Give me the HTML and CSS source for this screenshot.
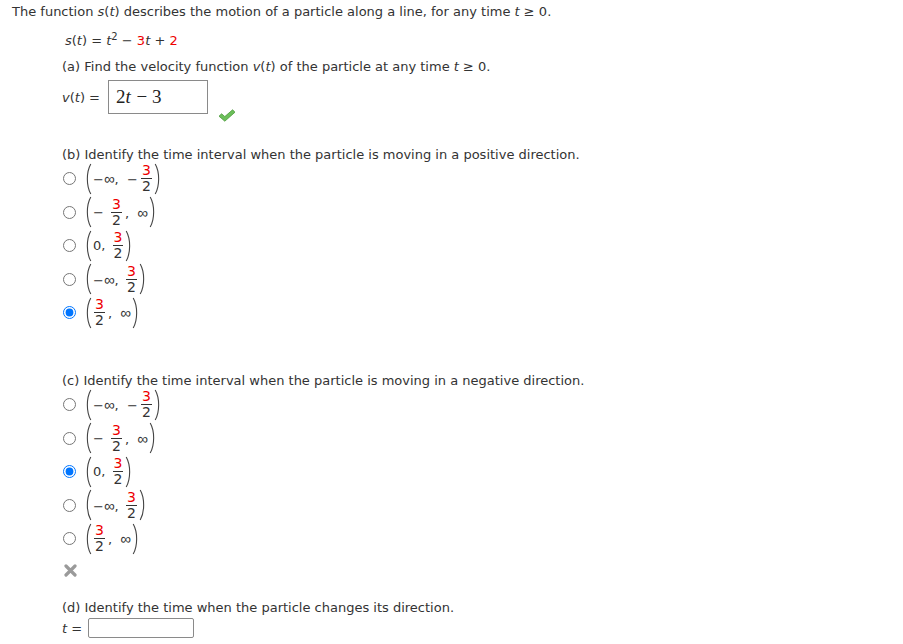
FILE: index.html
```html
<!DOCTYPE html>
<html>
<head>
<meta charset="utf-8">
<link rel="stylesheet" href="styles.css">
</head>
<body>
<div class="page">
  <div class="intro">The function <i>s</i>(<i>t</i>) describes the motion of a particle along a line, for any time <i>t</i> ≥ 0.</div>
  <div class="part">
    <div class="eq">
      <i>s</i>(<i>t</i>) = <i>t</i><sup>2</sup> − <span class="red">3</span><i>t</i> + <span class="red">2</span>
    </div>
    <div class="q qa">(a) Find the velocity function <i>v</i>(<i>t</i>) of the particle at any time <i>t</i> ≥ 0.</div>
    <div class="vrow">
      <span class="vlabel"><i>v</i>(<i>t</i>) =</span>
      <span class="answer"><span>2<i>t</i> − 3</span></span>
      <svg class="check" width="18" height="13" viewBox="0 0 18 13"><path d="M1 7.2 L3.6 4.8 L6.8 7.6 L14.6 0.8 L17 3.2 L6.8 12.2 Z" fill="#6cbf5a" stroke="#4e9a3e" stroke-width="0.8" stroke-linejoin="round"/></svg>
    </div>

    <div class="q qb">(b) Identify the time interval when the particle is moving in a positive direction.</div>
    <div class="options">
      <label class="opt"><input type="radio" name="b"><svg class="paren" width="7" height="32" viewBox="0 0 7 32"><path d="M5.8 1 C1.2 9 1.2 23 5.8 31"/></svg><span class="c">−<span class="inf">∞</span>,&nbsp;&nbsp;−</span><span class="frac"><span class="num">3</span><span class="den">2</span></span><svg class="paren" width="7" height="32" viewBox="0 0 7 32"><path d="M1.2 1 C5.8 9 5.8 23 1.2 31"/></svg></label>
      <label class="opt"><input type="radio" name="b"><svg class="paren" width="7" height="32" viewBox="0 0 7 32"><path d="M5.8 1 C1.2 9 1.2 23 5.8 31"/></svg><span class="c">−&nbsp;</span><span class="frac"><span class="num">3</span><span class="den">2</span></span><span class="c">,&nbsp;&nbsp;<span class="inf">∞</span></span><svg class="paren" width="7" height="32" viewBox="0 0 7 32"><path d="M1.2 1 C5.8 9 5.8 23 1.2 31"/></svg></label>
      <label class="opt"><input type="radio" name="b"><svg class="paren" width="7" height="32" viewBox="0 0 7 32"><path d="M5.8 1 C1.2 9 1.2 23 5.8 31"/></svg><span class="c">0,&nbsp;</span><span class="frac"><span class="num">3</span><span class="den">2</span></span><svg class="paren" width="7" height="32" viewBox="0 0 7 32"><path d="M1.2 1 C5.8 9 5.8 23 1.2 31"/></svg></label>
      <label class="opt"><input type="radio" name="b"><svg class="paren" width="7" height="32" viewBox="0 0 7 32"><path d="M5.8 1 C1.2 9 1.2 23 5.8 31"/></svg><span class="c">−<span class="inf">∞</span>,&nbsp;</span><span class="frac"><span class="num">3</span><span class="den">2</span></span><svg class="paren" width="7" height="32" viewBox="0 0 7 32"><path d="M1.2 1 C5.8 9 5.8 23 1.2 31"/></svg></label>
      <label class="opt"><input type="radio" name="b" checked><svg class="paren" width="7" height="32" viewBox="0 0 7 32"><path d="M5.8 1 C1.2 9 1.2 23 5.8 31"/></svg><span class="frac"><span class="num">3</span><span class="den">2</span></span><span class="c">,&nbsp;&nbsp;<span class="inf">∞</span></span><svg class="paren" width="7" height="32" viewBox="0 0 7 32"><path d="M1.2 1 C5.8 9 5.8 23 1.2 31"/></svg></label>
    </div>

    <div class="q qc">(c) Identify the time interval when the particle is moving in a negative direction.</div>
    <div class="options">
      <label class="opt"><input type="radio" name="c"><svg class="paren" width="7" height="32" viewBox="0 0 7 32"><path d="M5.8 1 C1.2 9 1.2 23 5.8 31"/></svg><span class="c">−<span class="inf">∞</span>,&nbsp;&nbsp;−</span><span class="frac"><span class="num">3</span><span class="den">2</span></span><svg class="paren" width="7" height="32" viewBox="0 0 7 32"><path d="M1.2 1 C5.8 9 5.8 23 1.2 31"/></svg></label>
      <label class="opt"><input type="radio" name="c"><svg class="paren" width="7" height="32" viewBox="0 0 7 32"><path d="M5.8 1 C1.2 9 1.2 23 5.8 31"/></svg><span class="c">−&nbsp;</span><span class="frac"><span class="num">3</span><span class="den">2</span></span><span class="c">,&nbsp;&nbsp;<span class="inf">∞</span></span><svg class="paren" width="7" height="32" viewBox="0 0 7 32"><path d="M1.2 1 C5.8 9 5.8 23 1.2 31"/></svg></label>
      <label class="opt"><input type="radio" name="c" checked><svg class="paren" width="7" height="32" viewBox="0 0 7 32"><path d="M5.8 1 C1.2 9 1.2 23 5.8 31"/></svg><span class="c">0,&nbsp;</span><span class="frac"><span class="num">3</span><span class="den">2</span></span><svg class="paren" width="7" height="32" viewBox="0 0 7 32"><path d="M1.2 1 C5.8 9 5.8 23 1.2 31"/></svg></label>
      <label class="opt"><input type="radio" name="c"><svg class="paren" width="7" height="32" viewBox="0 0 7 32"><path d="M5.8 1 C1.2 9 1.2 23 5.8 31"/></svg><span class="c">−<span class="inf">∞</span>,&nbsp;</span><span class="frac"><span class="num">3</span><span class="den">2</span></span><svg class="paren" width="7" height="32" viewBox="0 0 7 32"><path d="M1.2 1 C5.8 9 5.8 23 1.2 31"/></svg></label>
      <label class="opt"><input type="radio" name="c"><svg class="paren" width="7" height="32" viewBox="0 0 7 32"><path d="M5.8 1 C1.2 9 1.2 23 5.8 31"/></svg><span class="frac"><span class="num">3</span><span class="den">2</span></span><span class="c">,&nbsp;&nbsp;<span class="inf">∞</span></span><svg class="paren" width="7" height="32" viewBox="0 0 7 32"><path d="M1.2 1 C5.8 9 5.8 23 1.2 31"/></svg></label>
    </div>
    <div class="xrow">
      <svg width="13" height="13" viewBox="0 0 13 13"><path d="M2 2 L11 11 M11 2 L2 11" stroke="#9a9a9a" stroke-width="3.2" stroke-linecap="round"/></svg>
    </div>

    <div class="q qd">(d) Identify the time when the particle changes its direction.</div>
    <div class="trow">
      <span class="tlabel"><i>t</i> =</span>
      <span class="tbox"></span>
    </div>
  </div>
</div>
</body>
</html>
```
FILE: styles.css
```css
* { box-sizing: border-box; }
html, body { margin: 0; padding: 0; background: #fff; }
body {
  font-family: "DejaVu Sans", Verdana, sans-serif;
  font-size: 13px;
  color: #333;
}
.page { padding: 0 0 0 12px; }
.intro { line-height: 24px; height: 24px; }
.part { margin-left: 50px; }
.red { color: #e00; }
i { font-style: italic; }
sup { font-size: 10px; line-height: 0; vertical-align: 5px; }
.eq { margin-top: 7px; line-height: 20px; height: 20px; padding-left: 3px; }
.q { line-height: 14px; height: 14px; }
.qa { margin-top: 9px; }
.vrow { display: flex; align-items: center; margin-top: 6px; height: 34px; }
.vlabel { width: 46px; }
.answer {
  width: 100px; height: 34px;
  border: 1px solid #8a8a8a;
  font-family: "Liberation Serif", "Times New Roman", serif;
  font-size: 19px;
  color: #222;
  padding-left: 7px;
  display: flex; align-items: center;
}
.answer i { margin-right: 1px; }
.check { align-self: flex-end; margin-left: 10px; margin-bottom: -8px; }
.qb { margin-top: 34px; }
.options { display: flex; flex-direction: column; }
.opt { display: flex; align-items: center; height: 33.5px; }
.opt input {
  margin: 0 9px 0 1px;
  width: 13px; height: 13px;
}
.paren path { fill: none; stroke: #444; stroke-width: 1.1; }
.paren { flex: none; }
.c { padding: 0 1px; white-space: nowrap; }
.inf { font-family: "Liberation Sans", Arial, sans-serif; font-size: 15px; }
.frac {
  display: inline-flex; flex-direction: column; align-items: center;
  font-size: 14px; line-height: 13px; margin: 0 2px;
}
.num { color: #e00; padding: 0 1px 1px; border-bottom: 1px solid #333; }
.den { padding-top: 1px; }
.qc { margin-top: 44.5px; }
.xrow { margin-top: 6.5px; height: 16px; display: flex; align-items: center; padding-left: 2px; }
.qd { margin-top: 23px; }
.trow { display: flex; align-items: center; margin-top: 3px; height: 20px; }
.tlabel { width: 26px; }
.tbox { width: 106px; height: 20px; border: 1px solid #8a8a8a; border-radius: 2px; }
```
